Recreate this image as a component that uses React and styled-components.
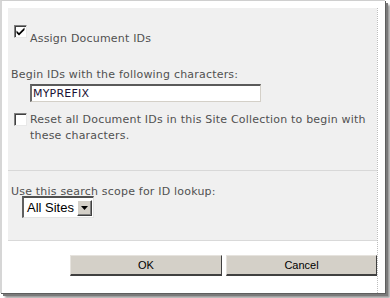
import React from "react";
import styled, { createGlobalStyle } from "styled-components";

const Global = createGlobalStyle`
  html, body { margin: 0; padding: 0; background: #ffffff; }
  body { width: 390px; height: 298px; overflow: hidden; }
`;

const Frame = styled.div`
  box-sizing: border-box;
  width: 385px;
  height: 293px;
  background: #ffffff;
  border-top: 1px solid #cfcfcf;
  border-left: 2px solid #d6d6d6;
  box-shadow: 1px 1px 0 #5e5e5e, 3px 3px 0 #7a7a7a, 5px 5px 2px rgba(0, 0, 0, 0.4);
  padding: 7px 0 0 6px;
`;

const Column = styled.div`
  box-sizing: border-box;
  width: 370px;
  height: 285px;
  border-right: 1px dotted #bdbdbd;
  display: flex;
  flex-direction: column;
`;

const Panel = styled.div`
  background: #f0f0f0;
  border-bottom: 1px solid #d9d9d9;
  font-family: "DejaVu Sans", Verdana, sans-serif;
  font-size: 11px;
  letter-spacing: 0.2px;
  color: #505050;
`;

const Section = styled.div`
  padding: ${(p) => p.$pad};
  border-top: ${(p) => (p.$divided ? "1px solid #d8d8d8" : "none")};
`;

const CheckRow = styled.div`
  display: flex;
  align-items: flex-start;
  margin: ${(p) => p.$margin || "0"};
`;

const Box = styled.span`
  box-sizing: border-box;
  flex: none;
  width: 13px;
  height: 13px;
  background: #ffffff;
  border-top: 1px solid #808080;
  border-left: 1px solid #808080;
  border-right: 1px solid #e8e8e8;
  border-bottom: 1px solid #e8e8e8;
  box-shadow: inset 1px 1px 0 #404040;
  display: flex;
  align-items: center;
  justify-content: center;
`;

const CheckLabel = styled.span`
  margin-left: 3px;
  line-height: ${(p) => p.$lh || "14px"};
  margin-top: ${(p) => p.$top || "0"};
  width: ${(p) => p.$width || "auto"};
`;

const FieldLabel = styled.div`
  line-height: ${(p) => p.$lh || "14px"};
  margin-top: ${(p) => p.$top || "0"};
`;

const TextInput = styled.div`
  box-sizing: border-box;
  width: 231px;
  height: 18px;
  margin: 2px 0 0 19px;
  background: #ffffff;
  border-top: 2px solid #5a5a5a;
  border-left: 2px solid #6a6a6a;
  border-right: 1px solid #d4d0c8;
  border-bottom: 1px solid #d4d0c8;
  padding-left: 1px;
  line-height: 15px;
  color: #1a1033;
  font-size: 11px;
`;

const Select = styled.div`
  box-sizing: border-box;
  display: inline-flex;
  align-items: center;
  width: 72px;
  height: 22px;
  margin: -2px 0 0 11px;
  background: #ffffff;
  border-top: 2px solid #505050;
  border-left: 2px solid #606060;
  border-right: 1px solid #e4e4e4;
  border-bottom: 1px solid #e4e4e4;
  font-family: "Liberation Sans", Arial, sans-serif;
  font-size: 13px;
  letter-spacing: 0;
  color: #000000;
`;

const SelectText = styled.span`
  flex: 1;
  padding-left: 3px;
  line-height: 16px;
`;

const ArrowBtn = styled.span`
  box-sizing: border-box;
  width: 15px;
  height: 16px;
  margin-right: 1px;
  background: #d4d0c8;
  border-top: 1px solid #ffffff;
  border-left: 1px solid #ffffff;
  border-right: 1px solid #404040;
  border-bottom: 1px solid #404040;
  box-shadow: inset -1px -1px 0 #808080;
  display: flex;
  align-items: center;
  justify-content: center;
`;

const Footer = styled.div`
  flex: 1;
  display: flex;
  justify-content: flex-end;
  align-items: flex-start;
  gap: 4px;
  padding-top: 14px;
`;

const Button = styled.button`
  box-sizing: border-box;
  width: ${(p) => p.$w}px;
  height: 21px;
  margin: 0;
  padding: 0;
  background: #d4d0c8;
  border: none;
  border-top: 1px solid #e6e3de;
  border-left: 1px solid #e6e3de;
  border-right: 1px solid #404040;
  border-bottom: 2px solid #404040;
  font-family: "Liberation Sans", Tahoma, sans-serif;
  font-size: 11px;
  color: #000000;
  line-height: 17px;
`;

function Check({ checked }) {
  return (
    <Box>
      {checked && (
        <svg width="9" height="9" viewBox="0 0 9 9">
          <path d="M0.5 3.5 L3 6 L8.5 0.5 L8.5 3 L3 8.5 L0.5 6 Z" fill="#000" />
        </svg>
      )}
    </Box>
  );
}

export default function App() {
  return (
    <>
      <Global />
      <Frame>
        <Column>
          <Panel>
            <Section $pad="17px 0 26px 3px">
              <CheckRow $margin="0 0 0 3px">
                <Check checked />
                <CheckLabel $top="7px">Assign Document IDs</CheckLabel>
              </CheckRow>
              <FieldLabel $top="22px">Begin IDs with the following characters:</FieldLabel>
              <TextInput>MYPREFIX</TextInput>
              <CheckRow $margin="11px 0 0 3px">
                <Check />
                <CheckLabel $lh="16px" $top="-1px" $width="345px">
                  Reset all Document IDs in this Site Collection to begin with these characters.
                </CheckLabel>
              </CheckRow>
            </Section>
            <Section $divided $pad="15px 0 22px 3px">
              <FieldLabel $lh="12px">Use this search scope for ID lookup:</FieldLabel>
              <Select>
                <SelectText>All Sites</SelectText>
                <ArrowBtn>
                  <svg width="7" height="4" viewBox="0 0 7 4">
                    <path d="M0 0 H7 L3.5 4 Z" fill="#000" />
                  </svg>
                </ArrowBtn>
              </Select>
            </Section>
          </Panel>
          <Footer>
            <Button $w={152}>OK</Button>
            <Button $w={151}>Cancel</Button>
          </Footer>
        </Column>
      </Frame>
    </>
  );
}
